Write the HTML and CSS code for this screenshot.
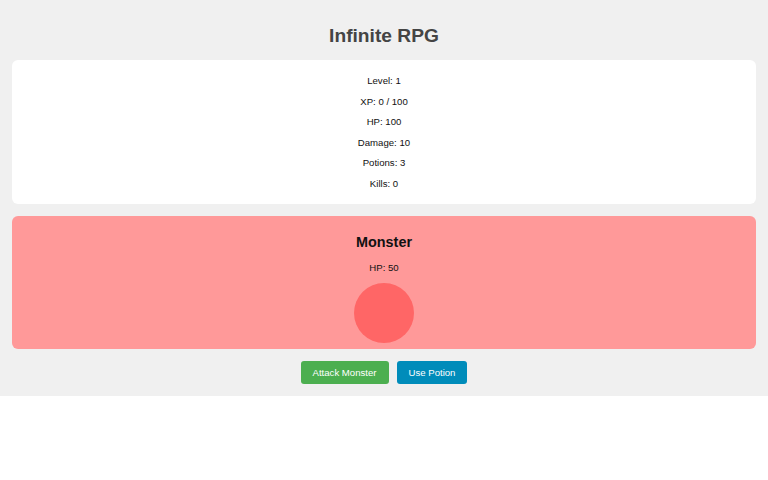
FILE: index.html
```html
<!DOCTYPE html>
<html>
  <head>
    <title>Infinite RPG</title>
    <link rel="stylesheet" href="styles.css">
  </head>
  <body>
    <div class='game'>
      <h1>Infinite RPG</h1>

      <div class='card stats'>
        <p>Level: <span id='level'>1</span></p>
        <p>XP: <span id='xp'>0</span> / <span id='xp-next'>100</span></p>
        <p>HP: <span id='hp'>100</span></p>
        <p>Damage: <span id='damage'>10</span></p>
        <p>Potions: <span id='potions'>3</span></p>
        <p>Kills: <span id='kills'>0</span></p>
      </div>

      <div class='card monster'>
        <h2>Monster</h2>
        <p>HP: <span id='monster-hp'>50</span></p>
        <div class='blob'></div>
      </div>

      <div class='actions'>
        <button class='attack'>Attack Monster</button>
        <button class='potion'>Use Potion</button>
      </div>
    </div>
  </body>
</html>
```

FILE: styles.css
```css
html, body {
  margin: 0;
  font-family: 'Liberation Sans', Arial, sans-serif;
  font-size: 9.6px;
  color: #111;
}

/* page layout */
.game {
  background: #f0f0f0;
  padding: 12px;
  text-align: center;
}

h1 {
  font-size: 19.2px;
  color: #444;
  margin: 12.9px 0;
}

.card {
  background: white;
  border-radius: 6px;
  padding: 6px;
  margin-bottom: 12px;
}

.card p {
  margin: 9.5px 0;
}

/* monster */
.monster {
  background: #ff9999;
}

.monster h2 {
  font-size: 14.4px;
  margin: 12px 0;
  color: #111;
}

.blob {
  width: 60px;
  height: 60px;
  margin: 0 auto;
  border-radius: 50%;
  background: #ff6666;
}

/* buttons */
.actions {
  display: flex;
  justify-content: center;
  gap: 8px;
}

button {
  border: none;
  border-radius: 3px;
  padding: 6px 12px;
  font: inherit;
  color: white;
  cursor: pointer;
}

.attack { background: #4caf50; }
.potion { background: #008cba; }
```
